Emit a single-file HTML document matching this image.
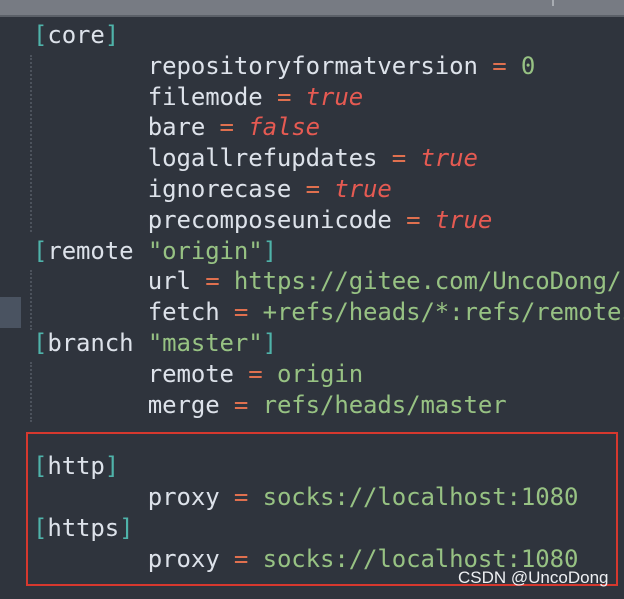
<!DOCTYPE html>
<html><head><meta charset="utf-8"><style>
body{margin:0;width:624px;height:599px;background:#2f343d;overflow:hidden;position:relative;font-family:"DejaVu Sans Mono","Liberation Mono",monospace}
.top{position:absolute;left:0;top:0;width:624px;height:15px;background:#777b83;border-bottom:2px solid #5b6068}
.tick{position:absolute;left:552px;top:0;width:2px;height:6px;background:#a8acb2}
.code{position:absolute;left:33px;top:20px;font-size:24px;line-height:30.8px;color:#dde2ea;white-space:pre;letter-spacing:-0.1px}
.b{color:#4fb3aa}.e{color:#e0704f}.t{color:#e55a52;font-style:italic}.s{color:#97c283}
.guide{position:absolute;left:30px;border-left:2px dotted #4c525c}
.blk{position:absolute;left:0;top:297px;width:21px;height:31px;background:#4a5361}
.red{position:absolute;left:26px;top:432px;width:588px;height:150px;border:2px solid #d6382e}
.wm{position:absolute;left:458px;top:568px;font-family:"Liberation Sans",sans-serif;font-size:17px;color:#eef0f3}
</style></head><body>
<div class="top"><div class="tick"></div></div>
<div class="blk"></div>
<div class="guide" style="top:55px;height:177px"></div>
<div class="guide" style="top:270px;height:60px"></div>
<div class="guide" style="top:362px;height:60px"></div>
<div class="code"><span class="b">[</span>core<span class="b">]</span>
        repositoryformatversion <span class="e">=</span> <span class="s">0</span>
        filemode <span class="e">=</span> <span class="t">true</span>
        bare <span class="e">=</span> <span class="t">false</span>
        logallrefupdates <span class="e">=</span> <span class="t">true</span>
        ignorecase <span class="e">=</span> <span class="t">true</span>
        precomposeunicode <span class="e">=</span> <span class="t">true</span>
<span class="b">[</span>remote <span class="s">"origin"</span><span class="b">]</span>
        url <span class="e">=</span> <span class="s">https://gitee.com/UncoDong/</span>
        fetch <span class="e">=</span> <span class="s">+refs/heads/*:refs/remotes</span>
<span class="b">[</span>branch <span class="s">"master"</span><span class="b">]</span>
        remote <span class="e">=</span> <span class="s">origin</span>
        merge <span class="e">=</span> <span class="s">refs/heads/master</span>

<span class="b">[</span>http<span class="b">]</span>
        proxy <span class="e">=</span> <span class="s">socks://localhost:1080</span>
<span class="b">[</span>https<span class="b">]</span>
        proxy <span class="e">=</span> <span class="s">socks://localhost:1080</span></div>
<div class="red"></div>
<div class="wm">CSDN @UncoDong</div>
</body></html>
